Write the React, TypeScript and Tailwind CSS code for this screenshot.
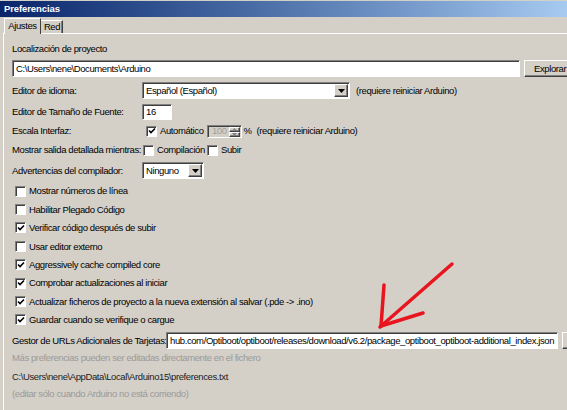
import React from "react";

const sunken =
  "border border-t-[#808080] border-l-[#808080] border-r-white border-b-white shadow-[inset_1px_1px_0_#404040]";
const raised =
  "border border-t-white border-l-white border-r-[#404040] border-b-[#404040] shadow-[inset_-1px_-1px_0_#808080] bg-[#d4d0c8]";

function Check({ on }: { on?: boolean }) {
  return (
    <div className={`w-[11px] h-[11px] shrink-0 bg-white flex items-center justify-center ${sunken}`}>
      {on && (
        <svg width="8" height="8" viewBox="0 0 8 8">
          <path d="M1 3.5 L3 5.5 L7 1.5" fill="none" stroke="#000" strokeWidth="1.6" />
        </svg>
      )}
    </div>
  );
}

function DownBtn() {
  return (
    <div className={`h-full w-[14px] shrink-0 flex items-center justify-center ${raised}`}>
      <svg width="7" height="4" viewBox="0 0 7 4">
        <path d="M0 0 H7 L3.5 4 Z" fill="#000" />
      </svg>
    </div>
  );
}

function Select({ value, width }: { value: string; width: number }) {
  return (
    <div className={`h-full shrink-0 flex bg-white ${sunken} p-[1px]`} style={{ width }}>
      <div className="flex-1 flex items-center pl-[2px] whitespace-nowrap overflow-hidden">{value}</div>
      <DownBtn />
    </div>
  );
}

const options: [string, boolean][] = [
  ["Mostrar números de línea", false],
  ["Habilitar Plegado Código", false],
  ["Verificar código después de subir", true],
  ["Usar editor externo", false],
  ["Aggressively cache compiled core", true],
  ["Comprobar actualizaciones al iniciar", true],
  ["Actualizar ficheros de proyecto a la nueva extensión al salvar (.pde -> .ino)", true],
  ["Guardar cuando se verifique o cargue", true],
];

export default function App() {
  return (
    <div className="relative w-[567px] h-[410px] overflow-hidden bg-[#d4d0c8] font-['Liberation_Sans',Arial,sans-serif] text-[9.5px] tracking-[-0.4px] leading-none text-black">
      <div className="h-[1px] bg-[#d4d0c8]" />
      <div className="h-[16px] bg-linear-to-r from-[#0a246a] to-[#a6caf0] flex items-center pl-[4px] text-white font-bold text-[9.5px] tracking-[-0.1px]">
        Preferencias
      </div>

      {/* tabs */}
      <div className="h-[16px] flex items-end pl-[4px]">
        <div className="relative z-10 h-[16px] -mb-px w-[37px] shrink-0 bg-[#d4d0c8] border-t border-l border-white border-r border-r-[#404040] flex items-center justify-center pb-[2px]">
          Ajustes
        </div>
        <div className="h-[13px] w-[22px] shrink-0 border-t border-white border-r border-r-[#404040] shadow-[inset_-1px_0_0_#808080] flex items-center justify-center pl-[1px]">
          Red
        </div>
      </div>

      {/* panel */}
      <div className="ml-[3px] border-t border-l border-white pl-[8px] h-[400px]">
        <div className="mt-[7px] h-[16px] flex items-center">Localización de proyecto</div>
        <div className="mt-[3px] h-[17px] flex">
          <div className={`w-[508px] shrink-0 h-full bg-white flex items-center pl-[3px] ${sunken}`}>
            C:\Users\nene\Documents\Arduino
          </div>
          <div className={`ml-[4px] w-[60px] shrink-0 h-full flex items-center pl-[9px] ${raised}`}>Explorar</div>
        </div>

        <div className="mt-[5px] h-[17px] flex items-center">
          <div className="w-[130px] shrink-0">Editor de idioma:</div>
          <Select value="Español (Español)" width={208} />
          <div className="ml-[6px] whitespace-nowrap">(requiere reiniciar Arduino)</div>
        </div>

        <div className="mt-[5px] h-[16px] flex items-center">
          <div className="w-[130px] shrink-0">Editor de Tamaño de Fuente:</div>
          <div className={`w-[30px] shrink-0 h-full bg-white flex items-center pl-[3px] ${sunken}`}>16</div>
        </div>

        <div className="mt-[4px] h-[14px] flex items-center whitespace-nowrap">
          <div className="w-[134px] shrink-0">Escala Interfaz:</div>
          <Check on />
          <div className="ml-[3px]">Automático</div>
          <div className={`ml-[3px] w-[35px] shrink-0 h-[13px] flex p-[1px] ${sunken}`}>
            <div className="flex-1 flex items-center justify-end pr-[2px] text-[#a0a0a0]">100</div>
            <div className="w-[11px] h-full flex flex-col">
              <div className={`flex-1 flex items-center justify-center ${raised}`}>
                <svg width="5" height="3" viewBox="0 0 5 3">
                  <path d="M0 3 H5 L2.5 0 Z" fill="#808080" />
                </svg>
              </div>
              <div className={`flex-1 flex items-center justify-center ${raised}`}>
                <svg width="5" height="3" viewBox="0 0 5 3">
                  <path d="M0 0 H5 L2.5 3 Z" fill="#808080" />
                </svg>
              </div>
            </div>
          </div>
          <div className="ml-[2px]">%</div>
          <div className="ml-[5px]">(requiere reiniciar Arduino)</div>
        </div>

        <div className="mt-[5px] h-[14px] flex items-center whitespace-nowrap">
          <div className="w-[131px] shrink-0">Mostrar salida detallada mientras:</div>
          <Check />
          <div className="ml-[3px] w-[50px] shrink-0">Compilación</div>
          <Check />
          <div className="ml-[3px]">Subir</div>
        </div>

        <div className="mt-[5px] h-[17px] flex items-center">
          <div className="w-[130px] shrink-0">Advertencias del compilador:</div>
          <Select value="Ninguno" width={62} />
        </div>

        <div className="mt-[3px] pl-[3px]">
          {options.map(([label, on]) => (
            <div key={label} className="h-[18.4px] flex items-center">
              <Check on={on} />
              <div className="ml-[3px] whitespace-nowrap">{label}</div>
            </div>
          ))}
        </div>

        <div className="mt-[3px] h-[17px] flex items-center">
          <div className="w-[154px] shrink-0 whitespace-nowrap">Gestor de URLs Adicionales de Tarjetas:</div>
          <div className={`w-[392px] shrink-0 h-full bg-white flex items-center pl-[3px] overflow-hidden whitespace-nowrap ${sunken}`}>
            hub.com/Optiboot/optiboot/releases/download/v6.2/package_optiboot_optiboot-additional_index.json
          </div>
          <div className={`ml-[4px] w-[20px] shrink-0 h-full ${raised}`} />
        </div>

        <div className="mt-[1px] h-[16px] flex items-center text-[#9a9a9a]">
          Más preferencias pueden ser editadas directamente en el fichero
        </div>
        <div className="mt-[3px] h-[16px] flex items-center text-[#222]">
          C:\Users\nene\AppData\Local\Arduino15\preferences.txt
        </div>
        <div className="mt-[1px] h-[16px] flex items-center text-[#9a9a9a]">
          (editar sólo cuando Arduino no está corriendo)
        </div>
      </div>

      <svg className="absolute inset-0 pointer-events-none" width="567" height="410" viewBox="0 0 567 410">
        <g stroke="#e8141e" strokeWidth="3.5" strokeLinecap="round" fill="none">
          <path d="M452 264 L380 327" />
          <path d="M384 285 L381 326" />
          <path d="M423 313 L381 326" />
        </g>
      </svg>
    </div>
  );
}
